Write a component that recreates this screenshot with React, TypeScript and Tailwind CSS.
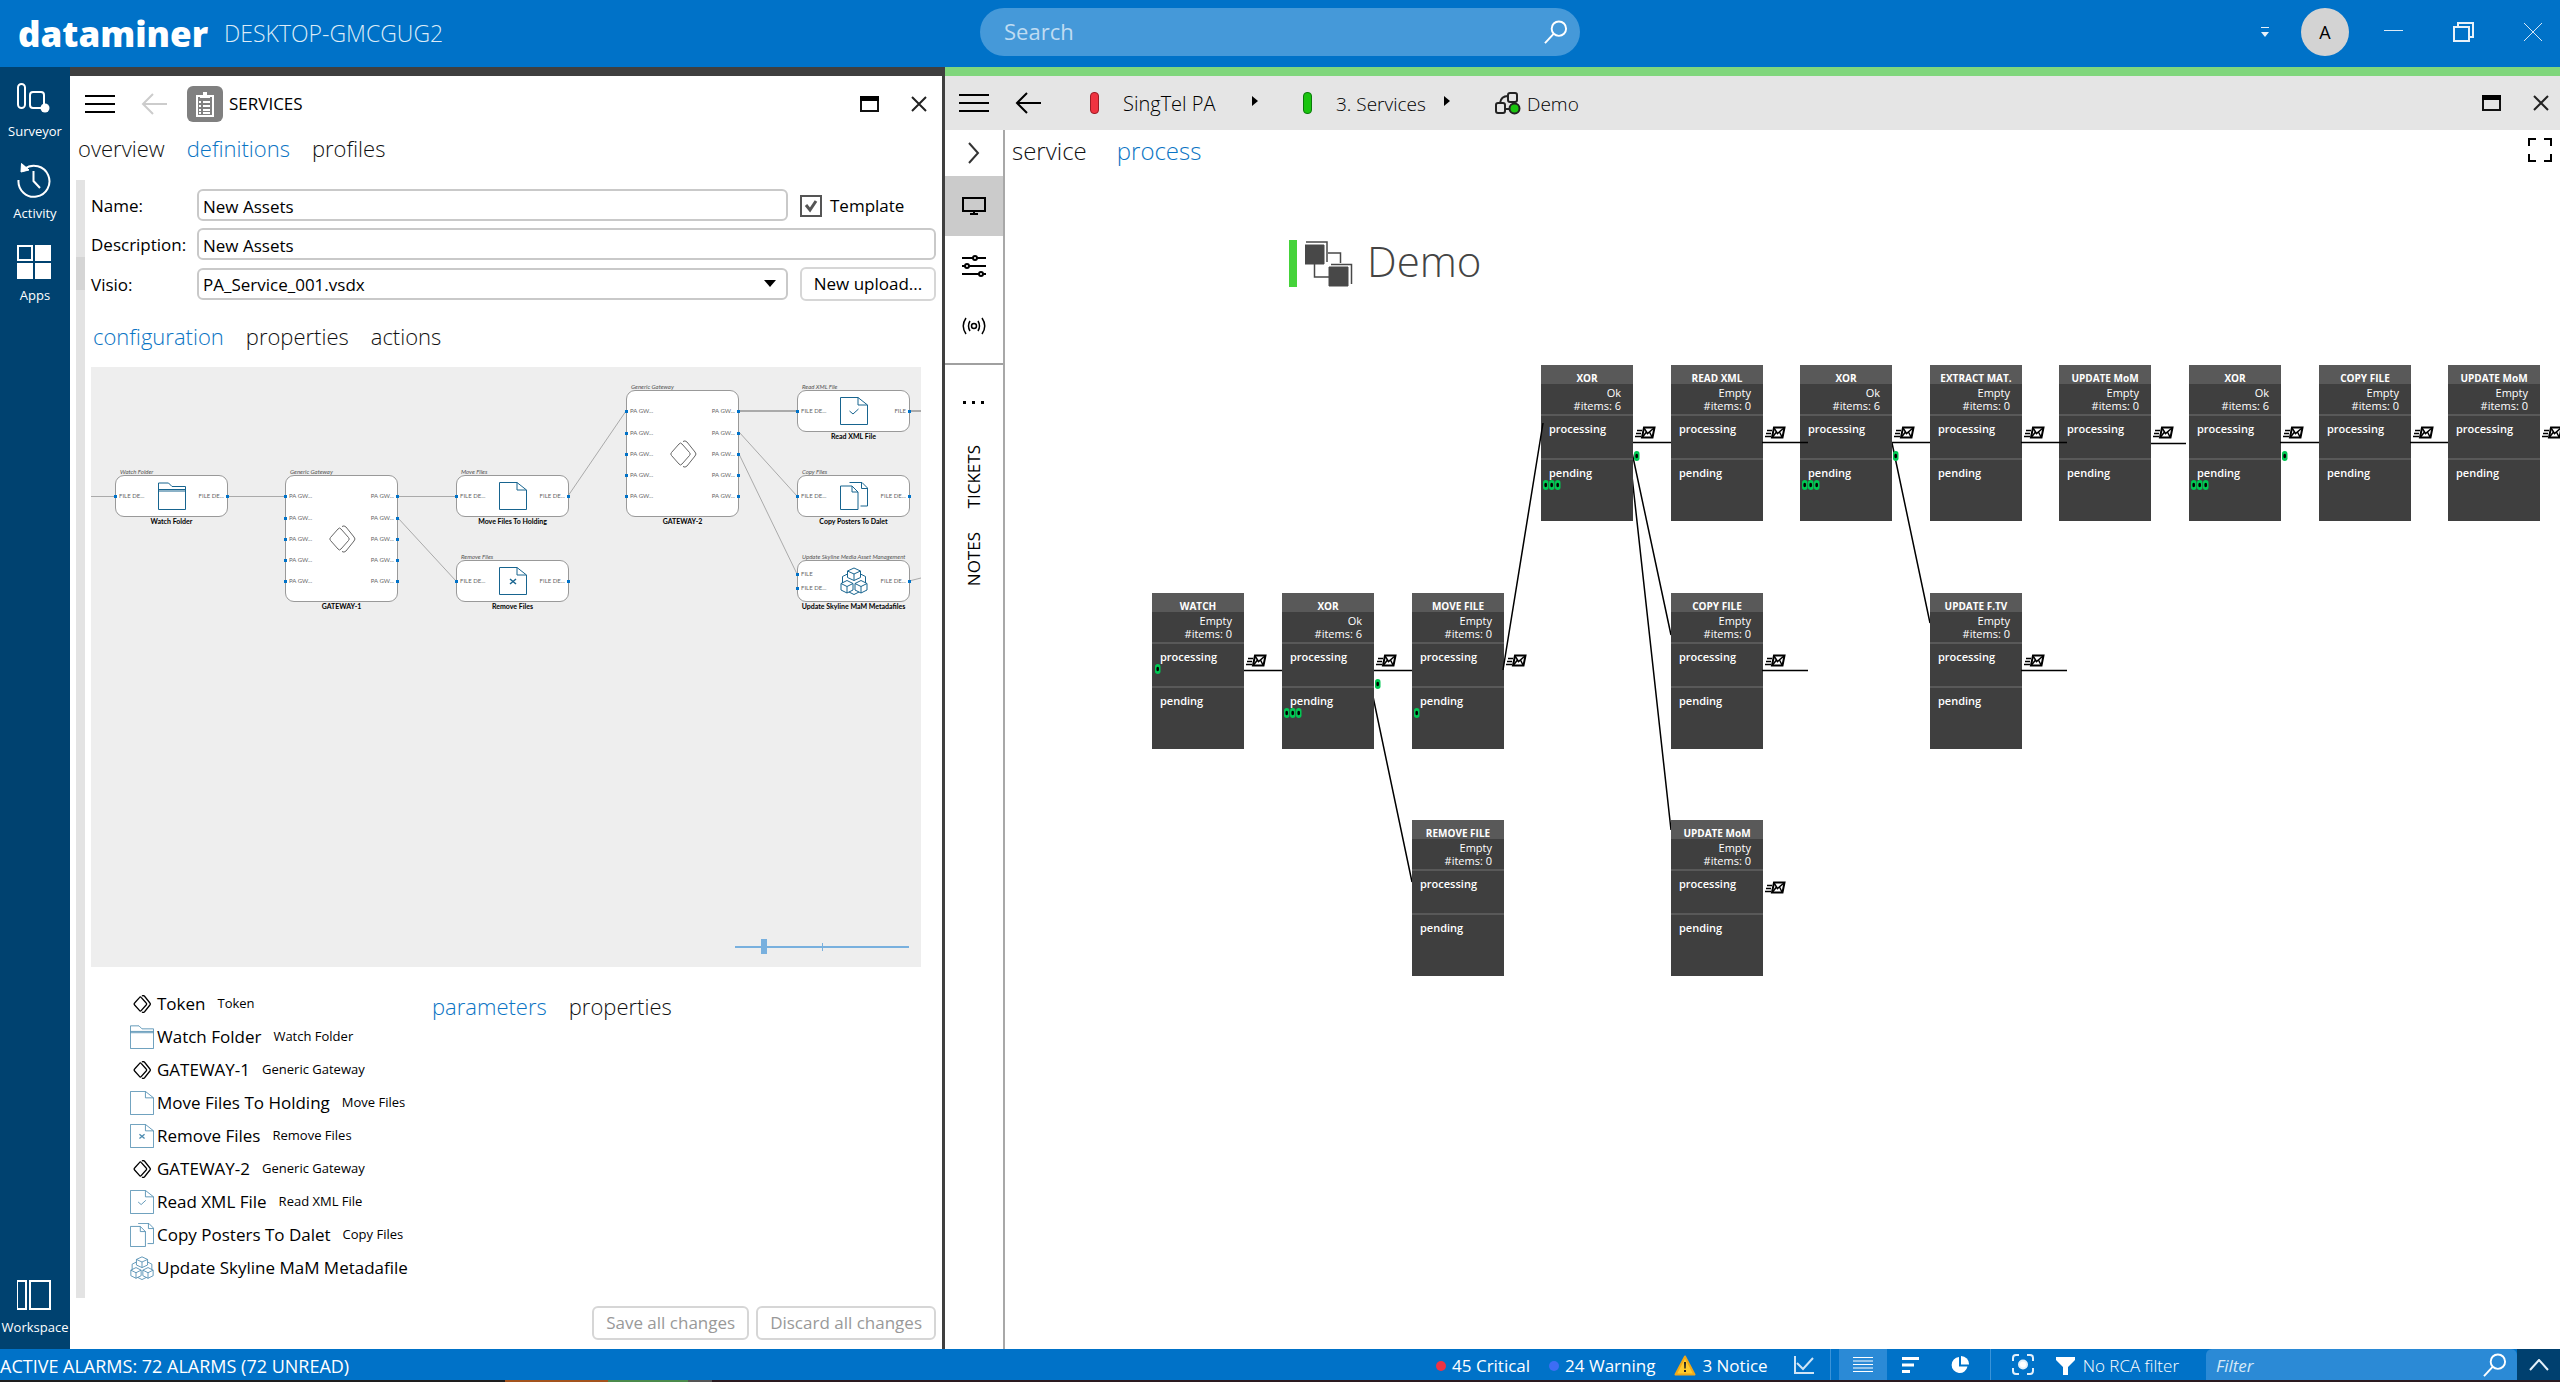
import { useState } from 'react'
import type { ReactNode } from 'react'

interface Box {
  name: string
  x: number
  y: number
  items?: number
  envelope?: boolean
  dots?: number[][]
}

interface Block {
  type: string
  name: string
  x: number
  y: number
  h: number
  icon: IconName
  inputs: Port[]
  outputs: Port[]
}

interface Port {
  y: number
  label: string
}

type IconName = 'folder' | 'token' | 'file' | 'remove' | 'check' | 'copy' | 'cubes'

const XOR_DOTS = [[2, 115], [8, 115], [14, 115], [93, 86]]

const BOXES: Box[] = [
  { name: 'XOR', x: 536, y: 235, items: 6, envelope: true, dots: XOR_DOTS },
  { name: 'READ XML', x: 666, y: 235, envelope: true },
  { name: 'XOR', x: 795, y: 235, items: 6, envelope: true, dots: XOR_DOTS },
  { name: 'EXTRACT MAT.', x: 925, y: 235, envelope: true },
  { name: 'UPDATE MoM', x: 1054, y: 235, envelope: true },
  { name: 'XOR', x: 1184, y: 235, items: 6, envelope: true, dots: XOR_DOTS },
  { name: 'COPY FILE', x: 1314, y: 235, envelope: true },
  { name: 'UPDATE MoM', x: 1443, y: 235, envelope: true },
  { name: 'WATCH', x: 147, y: 463, envelope: true, dots: [[3, 71]] },
  { name: 'XOR', x: 277, y: 463, items: 6, envelope: true, dots: XOR_DOTS },
  { name: 'MOVE FILE', x: 407, y: 463, envelope: true, dots: [[2, 115]] },
  { name: 'COPY FILE', x: 666, y: 463, envelope: true },
  { name: 'UPDATE F.TV', x: 925, y: 463, envelope: true },
  { name: 'REMOVE FILE', x: 407, y: 690 },
  { name: 'UPDATE MoM', x: 666, y: 690, envelope: true },
]

const FILE: Port[] = [{ y: 20, label: 'FILE DE...' }]
const GATEWAY: Port[] = [20, 42, 63, 84, 105].map((y) => ({ y, label: 'PA GW...' }))

const BLOCKS: Block[] = [
  { type: 'Watch Folder', name: 'Watch Folder', x: 24, y: 108, h: 42, icon: 'folder', inputs: FILE, outputs: FILE },
  { type: 'Generic Gateway', name: 'GATEWAY-1', x: 194, y: 108, h: 127, icon: 'token', inputs: GATEWAY, outputs: GATEWAY },
  { type: 'Move Files', name: 'Move Files To Holding', x: 365, y: 108, h: 42, icon: 'file', inputs: FILE, outputs: FILE },
  { type: 'Remove Files', name: 'Remove Files', x: 365, y: 193, h: 42, icon: 'remove', inputs: FILE, outputs: FILE },
  { type: 'Generic Gateway', name: 'GATEWAY-2', x: 535, y: 23, h: 127, icon: 'token', inputs: GATEWAY, outputs: GATEWAY },
  { type: 'Read XML File', name: 'Read XML File', x: 706, y: 23, h: 42, icon: 'check', inputs: FILE, outputs: [{ y: 20, label: 'FILE' }] },
  { type: 'Copy Files', name: 'Copy Posters To Dalet', x: 706, y: 108, h: 42, icon: 'copy', inputs: FILE, outputs: FILE },
  {
    type: 'Update Skyline Media Asset Management',
    name: 'Update Skyline MaM Metadafiles',
    x: 706,
    y: 193,
    h: 42,
    icon: 'cubes',
    inputs: [{ y: 13, label: 'FILE' }, { y: 27, label: 'FILE DE...' }],
    outputs: FILE,
  },
]

const NODE_LIST: { icon: IconName; name: string; type: string }[] = [
  { icon: 'token', name: 'Token', type: 'Token' },
  { icon: 'folder', name: 'Watch Folder', type: 'Watch Folder' },
  { icon: 'token', name: 'GATEWAY-1', type: 'Generic Gateway' },
  { icon: 'file', name: 'Move Files To Holding', type: 'Move Files' },
  { icon: 'remove', name: 'Remove Files', type: 'Remove Files' },
  { icon: 'token', name: 'GATEWAY-2', type: 'Generic Gateway' },
  { icon: 'check', name: 'Read XML File', type: 'Read XML File' },
  { icon: 'copy', name: 'Copy Posters To Dalet', type: 'Copy Files' },
  { icon: 'cubes', name: 'Update Skyline MaM Metadafile', type: '' },
]

function NodeIcon({ name, className }: { name: IconName; className: string }) {
  if (name === 'token') {
    return (
      <svg viewBox="0 0 28 28" className={className} fill="none" stroke="currentColor">
        <path d="M2.500 15.500 L10 24 Q11.500 26 13 24 L20.500 15.500 Q22 14 20.500 12.500 L13 4 Q11.500 2 10 4 L2.500 12.500 Q1 14 2.500 15.500z" />
        <path d="M14 1.500 Q16 0 18 2 L26 12 Q28 14 26 16 L18 26 Q16 28 14 26.500" />
      </svg>
    )
  }
  return (
    <svg viewBox="0 0 28 28" className={className} fill="none" stroke="currentColor">
      {name === 'folder' && <path d="M.5 27.500V1H10.500L14 4.500H27.500V27.500zM.5 7.500H27.500M.5 9H27.500" />}
      {(name === 'file' || name === 'remove' || name === 'check') && (
        <path d="M.5 .5H18L27.500 8V27.500H.5zM18 .5V8H27.500" />
      )}
      {name === 'remove' && <path d="M11 12L17 17M17 12L11 17" strokeWidth="1.500" />}
      {name === 'check' && <path d="M9.500 14L13 17L18.500 12" />}
      {name === 'copy' && <path d="M.5 4H12L18 10V27.500H.5zM12 4V10H18M9.500 .5H22L27.500 6V24H20.500M21.500 .5V6.500H27.500" />}
      {name === 'cubes' && (
        <g>
          <path d="M14 1L20.500 4V10.500L14 13.500L7.500 10.500V4zM7.500 4L14 7L20.500 4M14 7V13.500" />
          <path d="M7 13.500L13 16.500V23L7 26L1 23V16.500zM1 16.500L7 19.500L13 16.500M7 19.500V26" />
          <path d="M21 13.500L27 16.500V23L21 26L15 23V16.500zM15 16.500L21 19.500L27 16.500M21 19.500V26" />
          <path d="M7.500 7L2.500 9.500V16M20.500 7L25.500 9.500V16M9 25L14 27.500L19 25" />
        </g>
      )}
    </svg>
  )
}

function Tabs({ items, active, className }: { items: string[]; active: string; className: string }) {
  const [current, setCurrent] = useState(active)
  return (
    <nav className={`flex font-light ${className}`}>
      {items.map((item) => (
        <button
          key={item}
          onClick={() => setCurrent(item)}
          className={current === item ? 'text-[#0a74c4]' : 'text-[#111]'}
        >
          {item}
        </button>
      ))}
    </nav>
  )
}

function Hamburger() {
  return (
    <svg width="30" height="18" viewBox="0 0 30 18" stroke="#000" strokeWidth="2">
      <path d="M0 1H30M0 9H30M0 17H30" />
    </svg>
  )
}

function BackArrow({ className }: { className: string }) {
  return (
    <svg width="26" height="22" viewBox="0 0 26 22" fill="none" strokeWidth="2" className={className}>
      <path d="M12 1L2 11L12 21M2 11H26" />
    </svg>
  )
}

function WindowButtons() {
  return (
    <>
      <button aria-label="Undock">
        <svg width="19" height="16" viewBox="0 0 19 16">
          <rect x="1" y="1" width="17" height="14" fill="none" stroke="#111" strokeWidth="2" />
          <rect width="19" height="5" fill="#000" />
        </svg>
      </button>
      <button aria-label="Close">
        <svg width="16" height="16" viewBox="0 0 16 16" stroke="#222" strokeWidth="2">
          <path d="M1 1L15 15M15 1L1 15" />
        </svg>
      </button>
    </>
  )
}

function SearchIcon({ className }: { className: string }) {
  return (
    <svg viewBox="0 0 25 25" className={className} fill="none" stroke="#fff" strokeWidth="2">
      <circle cx="15.500" cy="9" r="7.500" />
      <path d="M10 14.500L1 24" />
    </svg>
  )
}

function Header() {
  return (
    <header className="flex h-[67px] shrink-0 items-center bg-[#0072c8]">
      <div className="flex flex-1 items-center gap-4 pl-[18px]">
        <span className="text-[35px] leading-none font-extrabold text-white">dataminer</span>
        <span className="text-[23px] text-[#dcebf7] font-light">DESKTOP-GMCGUG2</span>
      </div>
      <label className="mb-1 flex h-12 w-[600px] items-center rounded-full bg-[#4599d9] px-6">
        <input
          type="text"
          aria-label="Search"
          placeholder="Search"
          className="min-w-0 flex-1 text-[22px] text-white outline-none placeholder:text-[#bfdcf2]"
        />
        <SearchIcon className="-mr-3 size-6" />
      </label>
      <div className="mb-1 flex flex-1 items-center justify-end pr-[18px]">
        <button aria-label="Options">
          <svg width="8" height="10" viewBox="0 0 8 10" fill="#e8f1f9">
            <path d="M0 0H8V1H0zM0 5H8L4 10z" />
          </svg>
        </button>
        <button className="ml-8 size-12 rounded-full bg-[#d3d3d3] text-lg text-black">A</button>
        <button aria-label="Minimize" className="ml-[35px]">
          <svg width="19" height="20" stroke="#dcebf7">
            <path d="M0 8.500H19" />
          </svg>
        </button>
        <button aria-label="Restore" className="ml-[50px]">
          <svg width="21" height="20" viewBox="0 0 21 20" fill="none" stroke="#e8f1f9" strokeWidth="2">
            <path d="M1 5H16V19H1zM5 5V1H20V15H16" />
          </svg>
        </button>
        <button aria-label="Exit" className="ml-[50px]">
          <svg width="18" height="18" stroke="#d5e7f6">
            <path d="M0 0L18 18M18 0L0 18" />
          </svg>
        </button>
      </div>
    </header>
  )
}

function SideButton({ label, children }: { label: string; children: ReactNode }) {
  return (
    <button className="flex w-full flex-col items-center text-[13px] leading-5 text-white">
      <svg width="36" height="36" viewBox="0 0 36 36" fill="none" stroke="#fff" strokeWidth="2">
        {children}
      </svg>
      <span className="mt-[5px]">{label}</span>
    </button>
  )
}

function Sidebar() {
  return (
    <aside className="flex w-[70px] shrink-0 flex-col justify-between bg-[#004270] pt-[13px] pb-3">
      <div className="flex flex-col gap-[21px]">
        <SideButton label="Surveyor">
          <rect x="1" y="4" width="7" height="24" rx="3.500" />
          <path d="M27 24V15Q27 12 24 12H16Q13 12 13 15V25Q13 28 16 28H24" />
          <circle cx="28" cy="28" r="4.500" fill="#fff" stroke="none" />
        </SideButton>
        <SideButton label="Activity">
          <path d="M7.500 7A15.500 15.500 0 1 1 1.500 18" />
          <path d="M4.500 1.500L12 8L4 10z" fill="#fff" stroke="none" />
          <path d="M4.500 1.500L12 8L4 10z" fill="#fff" strokeWidth="1" />
          <path d="M16.500 9V19L23 26" />
        </SideButton>
        <SideButton label="Apps">
          <rect x="1" y="2" width="14" height="14" />
          <rect x="18" y="1" width="16" height="16" fill="#fff" stroke="none" />
          <rect y="19" width="16" height="16" fill="#fff" stroke="none" />
          <rect x="18" y="19" width="16" height="16" fill="#fff" stroke="none" />
        </SideButton>
      </div>
      <SideButton label="Workspace">
        <rect x="0" y="5" width="9" height="28" />
        <rect x="13" y="5" width="20" height="28" />
      </SideButton>
    </aside>
  )
}

function DesignBlock({ block }: { block: Block }) {
  return (
    <div
      className={`absolute rounded-[9px] border border-[#999] bg-white font-['Lato','Noto_Sans',sans-serif] ${block.icon === 'token' ? 'text-[#666]' : 'text-[#17648f]'}`}
      style={{ left: block.x, top: block.y, width: 113, height: block.h }}
    >
      <div className="absolute bottom-full left-1 text-[6px] leading-2 whitespace-nowrap text-[#555] italic">{block.type}</div>
      <div className="flex h-full items-center justify-center">
        <NodeIcon name={block.icon} className="size-7" />
      </div>
      {block.inputs.map((port) => (
        <div key={port.y} className="absolute -left-0.5 flex -translate-y-1/2 items-center gap-0.5 text-[6px] leading-2 text-[#666]" style={{ top: port.y }}>
          <i className="size-[3px] bg-[#0072c8]" />
          {port.label}
        </div>
      ))}
      {block.outputs.map((port) => (
        <div key={port.y} className="absolute -right-0.5 flex -translate-y-1/2 items-center gap-0.5 text-[6px] leading-2 text-[#666]" style={{ top: port.y }}>
          {port.label}
          <i className="size-[3px] bg-[#0072c8]" />
        </div>
      ))}
      <div className="absolute top-full left-1/2 -translate-x-1/2 text-[7px] leading-[11px] font-bold whitespace-nowrap text-black">
        {block.name}
      </div>
    </div>
  )
}

function DesignCanvas() {
  return (
    <div className="relative mr-[15px] h-[600px] shrink-0 overflow-hidden bg-[#eee]">
      <svg className="absolute inset-0 size-full" fill="none" stroke="#aaa">
        <path d="M0 129.500H24M136 129.500H194M307 129.500H365M307 151L365 214M477 129L535 44M648 65L706 129M648 87L706 207M818 214L830 211" />
        <path d="M648 44H706M818 44H830" strokeWidth="2" />
      </svg>
      {BLOCKS.map((block) => (
        <DesignBlock key={block.name} block={block} />
      ))}
      <input type="range" aria-label="Zoom" className="absolute right-3 bottom-3 h-4 w-[174px] opacity-0" />
      <svg className="pointer-events-none absolute right-3 bottom-3" width="174" height="16" fill="#78b0de">
        <path d="M0 7H174V9H0zM26 0H32V15H26zM87 4H88V12H87z" />
      </svg>
    </div>
  )
}

function ServicesPanel() {
  const [template, setTemplate] = useState(true)
  const field = 'h-8 min-w-0 rounded-md border-2 border-[#c9c9c9] bg-white px-1 pt-0.5 outline-none'
  const button = 'h-[34px] rounded-md border-2 border-[#d6d6d6]'

  return (
    <section className="flex min-w-0 flex-col border-t-[9px] border-[#3f3f3f] bg-white text-[17px] text-black">
      <div className="flex h-14 shrink-0 items-center pr-[15px] pl-[15px]">
        <button aria-label="Menu"><Hamburger /></button>
        <button aria-label="Back" className="ml-[26px]"><BackArrow className="stroke-[#ccc]" /></button>
        <span className="mr-1.5 ml-5 flex size-9 items-center justify-center rounded-md bg-[#808080]">
          <svg width="20" height="26" viewBox="0 0 20 26" fill="none" stroke="#fff" strokeWidth="2">
            <path d="M6 5H2V25H18V5H14M4 11H6M8 11H15M4 15H6M8 15H15M4 19H6M8 19H15M4 22H6M8 22H15" />
            <path d="M5 4H8V1H12V4H15V7H5z" fill="#fff" stroke="none" />
          </svg>
        </span>
        <h1 className="flex-1">SERVICES</h1>
        <div className="flex gap-8"><WindowButtons /></div>
      </div>
      <Tabs items={['overview', 'definitions', 'profiles']} active="definitions" className="h-12 shrink-0 items-start gap-[22px] pl-2 text-[22px]" />

      <div className="flex min-h-0 flex-1 pl-1.5">
        <div className="w-[9px] shrink-0 bg-[#e3e3e3] pt-[77px]">
          <div className="h-[33px] bg-[#d5d5d5]" />
        </div>
        <div className="flex min-w-0 flex-1 flex-col pr-1.5 pl-1.5">
          <div className="mt-[9px] grid grid-cols-[106px_1fr_148px] items-center gap-y-[7px] [&>label]:mt-0.5">
            <label htmlFor="name">Name:</label>
            <input id="name" defaultValue="New Assets" className={field} />
            <label className="flex items-center gap-2 pl-3">
              <input
                type="checkbox"
                checked={template}
                onChange={() => setTemplate(!template)}
                className="peer sr-only"
              />
              <svg width="22" height="22" viewBox="0 0 22 22" fill="none" stroke="#555">
                <rect x="1" y="1" width="20" height="20" strokeWidth="2" />
                {template && <path d="M6 10L10 15L16 6" strokeWidth="3" />}
              </svg>
              Template
            </label>
            <label htmlFor="description">Description:</label>
            <input id="description" defaultValue="New Assets" className={`${field} col-span-2`} />
            <label htmlFor="visio">Visio:</label>
            <div className="relative">
              <select id="visio" className={`${field} w-full appearance-none`}>
                <option>PA_Service_001.vsdx</option>
              </select>
              <svg className="pointer-events-none absolute top-3 right-3" width="12" height="7">
                <path d="M0 0H12L6 7z" />
              </svg>
            </div>
            <button className={`${button} ml-3`}>New upload...</button>
          </div>
          <Tabs items={['configuration', 'properties', 'actions']} active="configuration" className="mt-[18px] mb-3.5 h-[34px] shrink-0 items-center gap-[22px] pl-0.5 text-[22px]" />
          <DesignCanvas />
          <div className="mt-5 flex min-h-0 flex-1 items-start">
            <ul className="ml-[39px] w-[302px] shrink-0">
              {NODE_LIST.map((node) => (
                <li key={node.name} className="flex h-[33px] items-center gap-[3px] whitespace-nowrap">
                  <span className={`flex w-6 justify-center ${node.icon === 'token' ? 'text-black' : 'text-[#4d8bb0]'}`}>
                    <NodeIcon name={node.icon} className={node.icon === 'token' ? 'size-[18px] stroke-2' : 'size-6'} />
                  </span>
                  <span>{node.name}</span>
                  <span className="ml-[9px] text-[13px]">{node.type}</span>
                </li>
              ))}
            </ul>
            <Tabs items={['parameters', 'properties']} active="parameters" className="mt-[3px] gap-[22px] text-[22px]" />
          </div>
        </div>
      </div>
      <div className="flex h-[51px] shrink-0 justify-end gap-[7px] pt-2 pr-1.5 text-[#999]">
        <button disabled className={`${button} px-3`}>Save all changes</button>
        <button disabled className={`${button} px-3`}>Discard all changes</button>
      </div>
    </section>
  )
}

function ProcessBox({ box }: { box: Box }) {
  return (
    <div
      className="absolute h-[156px] w-[92px] bg-[#3f3f3f] text-[11px] leading-[13px] text-white"
      style={{ left: box.x, top: box.y }}
    >
      <div className="h-[19px] bg-[#595959] pt-[7px] text-center text-[10px] font-bold whitespace-nowrap">{box.name}</div>
      <div className="h-8 border-b-2 border-[#595959] pt-0.5 pr-3 text-right">
        <div>{box.items ? 'Ok' : 'Empty'}</div>
        <div>#items: {box.items ?? 0}</div>
      </div>
      <div className="h-11 border-b-2 border-[#595959] pt-1.5 pl-2 font-semibold">processing</div>
      <div className="pt-1.5 pl-2 font-semibold">pending</div>
      {box.envelope && (
        <svg className="absolute top-[61px] left-[94px]" width="21" height="13" fill="none" stroke="#000">
          <path d="M9 1.500H19.500L17.500 11.500H7z" strokeWidth="2" />
          <path d="M9 2L12.500 7.500L19 2M7.500 11L11.500 6M17 11L14.500 6" strokeWidth="1.500" />
          <path d="M2 4.500H7M1 7.500H6M0 10.500H6" strokeWidth="1.500" />
        </svg>
      )}
      {box.dots?.map(([x, y]) => (
        <svg key={x} className="absolute" style={{ left: x, top: y }} width="6" height="10">
          <rect width="5.500" height="10" rx="2.700" fill="#00c853" />
          <ellipse cx="2.700" cy="5" rx="1.400" ry="2.300" fill="#000" />
        </svg>
      ))}
    </div>
  )
}

function ProcessView() {
  return (
    <div className="relative min-w-0 flex-1 overflow-hidden">
      <Tabs items={['service', 'process']} active="process" className="items-center gap-[30px] pt-[5px] pl-[7px] text-2xl" />
      <button aria-label="Full screen" className="absolute top-2 right-2">
        <svg width="24" height="24" fill="none" stroke="#000" strokeWidth="2">
          <path d="M1 8V1H8M16 1H23V8M23 16V23H16M8 23H1V16" />
        </svg>
      </button>
      <div className="absolute top-[110px] left-[284px] flex items-center gap-2 text-[#444]">
        <span className="h-[47px] w-2 bg-[#45d33a]" />
        <svg width="48" height="47" viewBox="0 0 48 47" fill="none" stroke="#484848">
          <path d="M0 5H19V24H0zM24 27H43V46H24z" fill="#484848" />
          <path d="M1 2H22V22M26 24.500H46.500V44M23 13H35.500V23M9.500 24V37H24" strokeWidth="1.500" />
        </svg>
        <h2 className="mb-1.5 ml-1.5 text-[42px] leading-[41px] font-light">Demo</h2>
      </div>
      {/* wires that run behind the boxes */}
      <svg className="absolute inset-0 size-full" fill="none" stroke="#000" strokeWidth="1.500">
        <path d="M625 313L666 505M625 328L666 700M366 557L407 752M887 313L925 493" />
      </svg>
      {BOXES.map((box) => (
        <ProcessBox key={`${box.x}-${box.y}`} box={box} />
      ))}
      <svg className="pointer-events-none absolute inset-0 size-full" fill="none" stroke="#000" strokeWidth="1.500">
        <path d="M628 312.500H666M757 312.500H803M887 312.500H925M1016 312.500H1062M1146 313.500H1181M1275 312.500H1314M1405 312.500H1443" />
        <path d="M239 540.500H277M369 540.500H407M757 540.500H803M1016 540.500H1062M498 540L538 293" />
      </svg>
    </div>
  )
}

function Rail() {
  return (
    <div className="flex w-[60px] shrink-0 flex-col items-center border-r-2 border-[#a8a8a8]">
      <button aria-label="Expand" className="h-[46px]">
        <svg width="12" height="22" viewBox="0 0 12 22" fill="none" stroke="#333" strokeWidth="2">
          <path d="M1 1L10 11L1 21" />
        </svg>
      </button>
      <button aria-label="Visual" className="flex h-[60px] w-full items-center justify-center bg-[#cbcbcb]">
        <svg width="24" height="18" viewBox="0 0 24 18" fill="none" stroke="#000" strokeWidth="2">
          <path d="M1 1H23V14H1zM12 14V17M8 17H16" />
        </svg>
      </button>
      <button aria-label="Data" className="h-[60px]">
        <svg width="24" height="24" viewBox="0 0 24 24" fill="#fff" stroke="#000" strokeWidth="2">
          <path d="M0 4H24M0 12H24M0 20H24" />
          <circle cx="13" cy="4" r="2" />
          <circle cx="5" cy="12" r="2" />
          <circle cx="19" cy="20" r="2" />
        </svg>
      </button>
      <button aria-label="Alarms" className="h-[60px]">
        <svg width="24" height="18" viewBox="0 0 24 18" fill="none" stroke="#000" strokeWidth="1.500">
          <circle cx="12" cy="9" r="2.500" />
          <path d="M8 4Q5 9 8 14M16 4Q19 9 16 14M4 1Q-1.500 9 4 17M20 1Q25.500 9 20 17" />
        </svg>
      </button>
      <div className="mt-[7px] h-0.5 w-full bg-[#a0a0a0]" />
      <button aria-label="More" className="mt-9 mb-10">
        <svg width="22" height="4" viewBox="0 0 22 4">
          <path d="M0 0H3V3H0zM9 0H12V3H9zM18 0H21V3H18z" />
        </svg>
      </button>
      <button className="rotate-180 text-[17px] leading-6 [writing-mode:vertical-rl]">TICKETS</button>
      <button className="mt-6 rotate-180 text-[17px] leading-6 [writing-mode:vertical-rl]">NOTES</button>
    </div>
  )
}

function Crumb({ color, label, className }: { color: string; label: string; className: string }) {
  return (
    <a href="#" className={`flex items-center ${className}`}>
      <span className={`mr-6 h-[22px] w-[9px] rounded-sm border ${color}`} />
      <span className="mt-0.5">{label}</span>
      <svg className="mb-1 ml-auto" width="6" height="10">
        <path d="M0 0L6 5L0 10z" />
      </svg>
    </a>
  )
}

function ServiceCard() {
  return (
    <section className="flex min-w-0 flex-col border-t-[9px] border-[#80d67c] bg-white text-black">
      <div className="flex h-[54px] shrink-0 items-center bg-[#e5e5e5] pr-[11px] pl-3.5 font-light">
        <button aria-label="Menu"><Hamburger /></button>
        <button aria-label="Back" className="ml-[26px]"><BackArrow className="stroke-black" /></button>
        <nav className="ml-[49px] flex flex-1 items-center gap-[45px]">
          <Crumb color="border-[#9b1c26] bg-[#ef3340]" label="SingTel PA" className="w-[168px] text-xl" />
          <Crumb color="border-[#0b7a0b] bg-[#1ac40f]" label="3. Services" className="w-[147px] text-[19px]" />
          <a href="#" className="flex items-center gap-1.5 text-[19px]">
            <svg width="26" height="24" viewBox="0 0 26 24" fill="none" stroke="#222" strokeWidth="2">
              <rect x="1" y="12" width="9" height="10" rx="2" />
              <rect x="13" y="2" width="9" height="9" rx="2" />
              <path d="M5 12Q6 5 13 5M10 18H15" />
              <circle cx="19.500" cy="17.500" r="5" fill="#1ac40f" />
            </svg>
            <span className="mt-0.5">Demo</span>
          </a>
        </nav>
        <div className="flex gap-8"><WindowButtons /></div>
      </div>
      <div className="flex min-h-0 flex-1">
        <Rail />
        <ProcessView />
      </div>
    </section>
  )
}

function StatusBar() {
  return (
    <footer className="shrink-0 bg-[#0072c8] text-[17px] text-white">
      <div className="flex h-[31px] items-stretch">
        <span className="flex flex-1 items-center pt-0.5 text-lg leading-none">ACTIVE ALARMS: 72 ALARMS (72 UNREAD)</span>
        <span className="mr-[19px] flex items-center gap-1.5 pt-0.5"><i className="size-2.5 rounded-full bg-[#ee3344]" />45 Critical</span>
        <span className="mr-[19px] flex items-center gap-1.5 pt-0.5"><i className="size-2.5 rounded-full bg-[#3d6df5]" />24 Warning</span>
        <span className="mr-[26px] flex items-center gap-1.5 pt-0.5">
          <svg width="22" height="21" viewBox="0 0 22 21">
            <path d="M11 1.500L20.500 19.500H1.500z" fill="#ffcb2e" stroke="#f0a818" strokeWidth="2" strokeLinejoin="round" />
            <path d="M10 7H12L11.700 13.500H10.300zM10 15H12V17H10z" fill="#222" />
          </svg>
          3 Notice
        </span>
        <button aria-label="Trend" className="mr-4">
          <svg width="20" height="18" fill="none" stroke="#cfe4f5" strokeWidth="2">
            <path d="M1 0V17H20M3 7L9 13L19 2" />
          </svg>
        </button>
        <span className="w-px bg-[#3a93d8]" />
        <button aria-label="List" className="ml-2 flex w-12 items-center justify-center bg-[#2b8ad6]">
          <svg width="20" height="15" stroke="#fff" strokeWidth="1">
            <path d="M0 .5H20M0 4H20M0 7.500H20M0 11H20M0 14.500H20" />
          </svg>
        </button>
        <button aria-label="Sort" className="ml-[15px]">
          <svg width="17" height="16" stroke="#fff" strokeWidth="3">
            <path d="M0 1.500H17M0 8H12M0 14.500H8" />
          </svg>
        </button>
        <button aria-label="Chart" className="ml-[31px]">
          <svg width="20" height="18" viewBox="0 0 20 18" fill="#fff">
            <path d="M9 1A8 8 0 1 0 17.500 10.500H9z" />
            <path d="M11 0A8 8 0 0 1 19 8.500H11z" />
          </svg>
        </button>
        <span className="ml-5 w-px bg-[#3a93d8]" />
        <button aria-label="Focus" className="ml-[21px]">
          <svg width="22" height="21" viewBox="0 0 22 21" fill="none" stroke="#e4f0fa" strokeWidth="2">
            <circle cx="11" cy="10.500" r="4" fill="#fff" />
            <path d="M7 1H4Q1 1 1 4V7M15 1H18Q21 1 21 4V7M21 14V17Q21 20 18 20H15M7 20H4Q1 20 1 17V14" />
          </svg>
        </button>
        <button className="ml-[22px] flex items-center gap-2 pt-0.5 font-light">
          <svg width="19" height="18" fill="#fff">
            <path d="M0 0H19V3L12 10V18H7V10L0 3z" />
          </svg>
          No RCA filter
        </button>
        <label className="ml-[27px] flex w-[311px] items-center rounded-t-md bg-[#2b8ad6] pr-2.5 pl-2.5">
          <input
            type="text"
            aria-label="Filter"
            placeholder="Filter"
            className="min-w-0 flex-1 pt-0.5 italic outline-none placeholder:text-[#d5e8f7]"
          />
          <SearchIcon className="size-6" />
        </label>
        <button aria-label="Show alarms" className="flex w-[43px] items-center justify-center bg-[#00406f]">
          <svg width="20" height="12" fill="none" stroke="#e4f0fa" strokeWidth="2">
            <path d="M1 11L10 1L19 11" />
          </svg>
        </button>
      </div>
      <div className="grid h-0.5 grid-cols-[505fr_103fr_80fr_24fr_1848fr]">
        <i className="bg-[#1e1e1e]" />
        <i className="bg-[#a3531d]" />
        <i className="bg-[#4b8a4b]" />
        <i className="bg-[#555]" />
        <i className="bg-[#2a1a20]" />
      </div>
    </footer>
  )
}

export default function App() {
  return (
    <div className="flex h-screen flex-col overflow-hidden font-['Open_Sans','Noto_Sans',sans-serif]">
      <Header />
      <main className="flex min-h-0 flex-1">
        <Sidebar />
        <div className="grid min-w-0 flex-1 grid-cols-[872fr_3px_1615fr]">
          <ServicesPanel />
          <div className="bg-[#3f3f3f]" />
          <ServiceCard />
        </div>
      </main>
      <StatusBar />
    </div>
  )
}
